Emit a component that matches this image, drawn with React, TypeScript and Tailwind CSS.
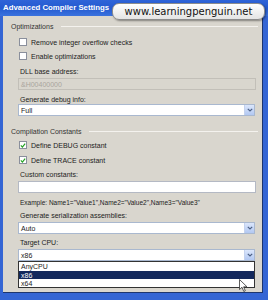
const ui = { fontFamily: '"Liberation Sans", Arial, sans-serif' };

function GroupHeader({ label, top }: { label: string; top: string }) {
  return (
    <div className={`flex items-center h-[10px] pl-[8px] pr-[4px] ${top}`}>
      <span className="text-[7px] text-[#333] leading-none whitespace-nowrap">{label}</span>
      <div className="flex-1 h-px bg-[#aaa69e] ml-[8px] border-b border-[#f4f2ee]" />
    </div>
  );
}

function Check({ label, checked, top }: { label: string; checked?: boolean; top: string }) {
  return (
    <div className={`flex items-center h-[10px] pl-[16px] ${top}`}>
      <div className="w-[8px] h-[8px] bg-white border border-[#8a8f9c] flex items-center justify-center">
        {checked && (
          <svg width="7" height="7" viewBox="0 0 7 7">
            <path d="M1 3.4 L2.8 5.3 L6 1.4" stroke="#21a121" strokeWidth="1.4" fill="none" />
          </svg>
        )}
      </div>
      <span className="ml-[4px] text-[7px] text-[#222] leading-none whitespace-nowrap">{label}</span>
    </div>
  );
}

function Label({ text, top, size = "text-[7px]" }: { text: string; top: string; size?: string }) {
  return (
    <div className={`flex items-center h-[10px] pl-[17px] ${top}`}>
      <span className={`${size} text-[#222] leading-none whitespace-nowrap`}>{text}</span>
    </div>
  );
}

function Chevron() {
  return (
    <div className="w-[10px] h-full bg-gradient-to-b from-[#dbe6fb] to-[#b2c8f2] border-l border-[#c4d2ee] flex items-center justify-center">
      <svg width="6" height="4" viewBox="0 0 6 4">
        <path d="M0.8 0.8 L3 3 L5.2 0.8" stroke="#4d6185" strokeWidth="1.2" fill="none" />
      </svg>
    </div>
  );
}

function Select({ value, top }: { value: string; top: string }) {
  return (
    <div className={`ml-[15px] mr-[7px] h-[12px] bg-white border border-[#a9b8cf] flex items-center ${top}`}>
      <span className="flex-1 pl-[2px] text-[7px] text-[#222] leading-none">{value}</span>
      <Chevron />
    </div>
  );
}

export default function App() {
  return (
    <div className="relative w-[268px] h-[300px] overflow-hidden bg-[#3465d4] pl-[3px] pr-[5px] pb-[7px] flex flex-col" style={ui}>
      {/* title bar */}
      <div className="-ml-[3px] -mr-[5px] h-[16px] bg-gradient-to-b from-[#2f64d8] via-[#245ad0] to-[#3a72de] flex items-center pl-[3px]">
        <span className="text-white font-bold text-[7.8px] leading-none whitespace-nowrap">Advanced Compiler Settings</span>
      </div>

      <div className="flex-1 flex flex-col bg-[#d9d6ce] border-r border-b border-[#1d356e]">
        <GroupHeader label="Optimizations" top="mt-[5px]" />
        <Check label="Remove integer overflow checks" top="mt-[6px]" />
        <Check label="Enable optimizations" top="mt-[4px]" />
        <Label text="DLL base address:" top="mt-[5px]" />
        <div className="mt-[2px] ml-[15px] mr-[6px] h-[12px] border border-[#c2bfb8] flex items-center pl-[2px]">
          <span className="text-[7px] text-[#a9a59d] leading-none">&amp;H00400000</span>
        </div>
        <Label text="Generate debug info:" top="mt-[4px]" />
        <Select value="Full" top="mt-0" />

        <GroupHeader label="Compilation Constants" top="mt-[10px]" />
        <Check label="Define DEBUG constant" checked top="mt-[4px]" />
        <Check label="Define TRACE constant" checked top="mt-[5px]" />
        <Label text="Custom constants:" top="mt-[4px]" />
        <div className="mt-[2px] ml-[15px] mr-[6px] h-[12px] bg-white border border-[#b4b9c4]" />
        <Label text={'Example: Name1="Value1",Name2="Value2",Name3="Value3"'} top="mt-[5px]" size="text-[6.5px]" />
        <Label text="Generate serialization assemblies:" top="mt-[2px]" />
        <Select value="Auto" top="mt-[2px]" />
        <Label text="Target CPU:" top="mt-[3px]" />
        <Select value="x86" top="mt-[2px]" />

        {/* open dropdown list */}
        <div className="ml-[15px] mr-[7px] h-[27px] bg-white border border-[#333] flex flex-col text-[7px] leading-none">
          <div className="h-[9px] flex items-center pl-[2px] text-[#222]">AnyCPU</div>
          <div className="h-[8px] flex items-center pl-[2px] bg-[#13285c] text-white">x86</div>
          <div className="h-[8px] flex items-center pl-[2px] text-[#222]">x64</div>
        </div>
      </div>

      {/* watermark */}
      <div className="absolute left-[112px] top-[3px] w-[153px] h-[17px] rounded-[7px] bg-gradient-to-b from-white to-[#e4e4e4] border border-[#8c8c8c] shadow-[1px_1px_2px_rgba(0,0,0,0.4)] flex items-center justify-center">
        <span className="text-[10px] text-[#111] leading-none whitespace-nowrap" style={{ fontFamily: '"DejaVu Sans", Verdana, sans-serif' }}>
          www.learningpenguin.net
        </span>
      </div>

      {/* mouse cursor */}
      <svg className="absolute left-[239px] top-[279px]" width="9" height="14" viewBox="0 0 9 14">
        <path d="M0.5 0.5 L0.5 10.5 L3 8.3 L4.8 12.5 L6.3 11.8 L4.6 7.8 L8 7.8 Z" fill="white" stroke="#333" strokeWidth="0.8" />
      </svg>
    </div>
  );
}
